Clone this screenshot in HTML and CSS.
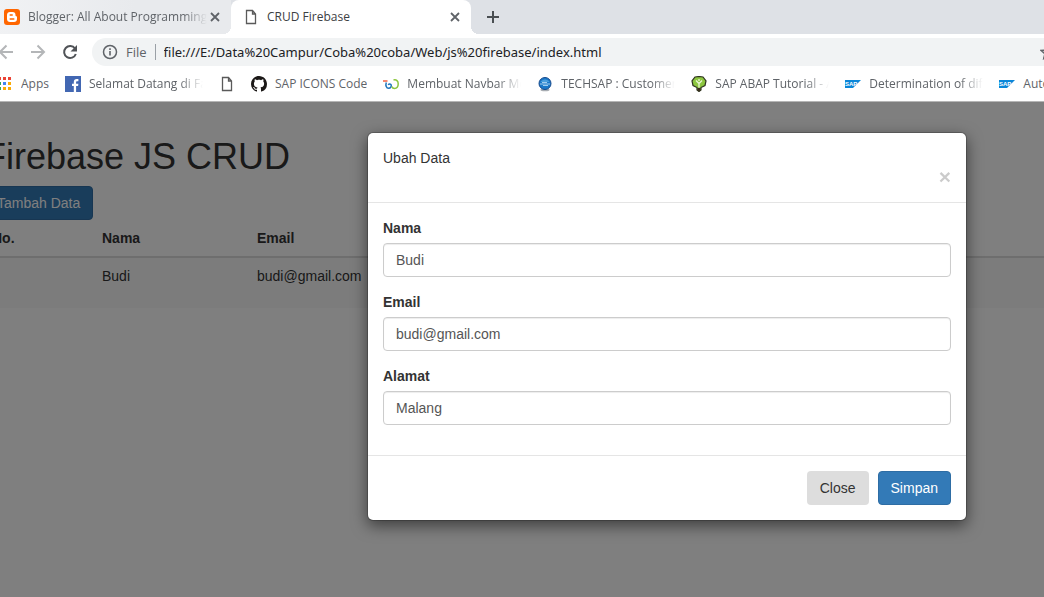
FILE: index.html
```html
<!DOCTYPE html>
<html lang="id">
<head>
    <meta charset="UTF-8">
    <meta name="viewport" content="width=device-width, initial-scale=1.0">
    <title>CRUD Firebase</title>
    <link rel="stylesheet" href="styles.css">
</head>
<body>
    <header class="browser">
        <div class="tabs">
            <div class="tab">
                <svg class="icon" viewBox="0 0 16 16">
                    <rect width="16" height="16" rx="3" fill="#ff6600"/>
                    <path d="M6 3h2.6C10.500 3 11.500 4.300 11.500 6v.6c0 .5.3.6.8.6s.7.3.7.8v2c0 1.800-1.200 3-3 3H6c-1.800 0-3-1.200-3-3V6c0-1.800 1.200-3 3-3z" fill="#fff"/>
                    <path d="M6.200 6h2M6.200 10h3.600" stroke="#ff6600" stroke-width="1.500" stroke-linecap="round"/>
                </svg>
                <span class="tab-title fade">Blogger: All About Programming</span>
                <button class="tab-close" type="button" aria-label="Close tab">
                    <svg class="icon" viewBox="0 0 16 16"><path d="M4 4l8 8M12 4l-8 8" stroke="#5f6368" stroke-width="1.800"/></svg>
                </button>
            </div>
            <div class="tab active">
                <svg class="icon" viewBox="0 0 16 16"><path d="M3.500 1.500h6l3 3.500v9.500h-9zM9.500 1.500V5h3" fill="none" stroke="#5a5a5a" stroke-width="1.300"/></svg>
                <span class="tab-title">CRUD Firebase</span>
                <button class="tab-close" type="button" aria-label="Close tab">
                    <svg class="icon" viewBox="0 0 16 16"><path d="M4 4l8 8M12 4l-8 8" stroke="#5f6368" stroke-width="1.800"/></svg>
                </button>
            </div>
            <button class="new-tab" type="button" aria-label="New tab">
                <svg class="icon" viewBox="0 0 16 16"><path d="M8 2v12M2 8h12" stroke="#4a4e52" stroke-width="2"/></svg>
            </button>
        </div>

        <div class="toolbar">
            <button class="nav-btn" type="button" aria-label="Back">
                <svg class="icon" viewBox="0 0 16 16"><path d="M15 8H2M8.500 1.500L2 8l6.500 6.500" fill="none" stroke="#b4b6b8" stroke-width="2"/></svg>
            </button>
            <button class="nav-btn" type="button" aria-label="Forward">
                <svg class="icon" viewBox="0 0 16 16"><path d="M1 8h13M7.500 1.500L14 8l-6.500 6.500" fill="none" stroke="#b4b6b8" stroke-width="2"/></svg>
            </button>
            <button class="nav-btn" type="button" aria-label="Reload">
                <svg class="icon" viewBox="0 0 16 16"><path d="M13 4.500A6 6 0 1 0 13.800 10" fill="none" stroke="#505357" stroke-width="2"/><path d="M15 1v6.500H8.500z" fill="#505357"/></svg>
            </button>
            <div class="address">
                <svg class="icon" viewBox="0 0 16 16"><circle cx="8" cy="8" r="6.500" fill="none" stroke="#5f6368" stroke-width="1.500"/><path d="M8 7v4.500M8 4.300v1.600" stroke="#5f6368" stroke-width="1.600"/></svg>
                <label class="scheme" for="url">File</label>
                <input class="url" id="url" type="text" value="file:///E:/Data%20Campur/Coba%20coba/Web/js%20firebase/index.html">
                <svg class="icon" viewBox="0 0 16 16"><path d="M8 1.500l1.900 4.600 4.900.4-3.700 3.200 1.100 4.800L8 12l-4.200 2.500 1.100-4.800L1.200 6.500l4.900-.4z" fill="none" stroke="#5f6368" stroke-width="1.500"/></svg>
            </div>
        </div>

        <nav class="bookmarks">
            <a class="bookmark" href="#">
                <svg class="icon" viewBox="0 0 16 16">
                    <path d="M1 1h3v3H1zM6 1h3v3H6zM11 1h3v3h-3z" fill="#ea4335"/>
                    <path d="M1 6h3v3H1zM1 11h3v3H1z" fill="#34a853"/>
                    <path d="M6 6h3v3H6z" fill="#4285f4"/>
                    <path d="M11 6h3v3h-3zM6 11h3v3H6zM11 11h3v3h-3z" fill="#fbab05"/>
                </svg>
                <span class="bookmark-text">Apps</span>
            </a>
            <a class="bookmark" href="#">
                <svg class="icon" viewBox="0 0 16 16"><rect width="16" height="16" fill="#4267b2"/><path d="M8.800 16v-6H7V7.700h1.800V6c0-1.900 1.100-3 2.900-3h1.700v2.200h-1.200c-.8 0-1.100.4-1.100 1.100v1.400h2.300L13.100 10h-2v6z" fill="#fff"/></svg>
                <span class="bookmark-text fade">Selamat Datang di Fa</span>
            </a>
            <a class="bookmark" href="#" aria-label="Bookmark">
                <svg class="icon" viewBox="0 0 16 16"><path d="M3.500 1.500h6l3 3.500v9.500h-9zM9.500 1.500V5h3" fill="none" stroke="#5a5a5a" stroke-width="1.300"/></svg>
            </a>
            <a class="bookmark" href="#">
                <svg class="icon" viewBox="0 0 16 16"><path fill="#1b1817" d="M8 0C3.580 0 0 3.580 0 8c0 3.540 2.290 6.530 5.470 7.590.4.070.55-.17.55-.38 0-.19-.01-.82-.01-1.490-2.010.37-2.530-.49-2.690-.94-.09-.23-.48-.94-.82-1.130-.28-.15-.68-.52-.01-.53.63-.01 1.080.58 1.230.82.72 1.210 1.870.87 2.330.66.07-.52.28-.87.51-1.070-1.780-.2-3.640-.89-3.640-3.950 0-.87.31-1.590.82-2.150-.08-.2-.36-1.020.08-2.120 0 0 .67-.21 2.200.82.64-.18 1.320-.27 2-.27s1.360.09 2 .27c1.530-1.040 2.200-.82 2.200-.82.44 1.100.16 1.920.08 2.120.51.56.82 1.270.82 2.150 0 3.070-1.870 3.750-3.650 3.950.29.25.54.73.54 1.480 0 1.070-.01 1.930-.01 2.200 0 .21.15.46.55.38A8.010 8.010 0 0 0 16 8c0-4.420-3.580-8-8-8z"/></svg>
                <span class="bookmark-text">SAP ICONS Code</span>
            </a>
            <a class="bookmark" href="#">
                <svg class="icon" viewBox="0 0 16 16" fill="none">
                    <path d="M0 5h4.500" stroke="#f26b4e" stroke-width="1.600"/>
                    <path d="M3.300 6.500c-1 3 0 5.700 2.300 5.700 2 0 3-1.600 2.600-3.200C7.800 7.700 6 7.500 5.200 8.800" stroke="#1c75bc" stroke-width="1.500"/>
                    <path d="M10.500 4c3-.8 4.700 1.200 4.700 3.800 0 2.900-1.700 4.700-3.700 4.700-1.300 0-2.300-.8-2.600-2" stroke="#8cc63f" stroke-width="1.500"/>
                </svg>
                <span class="bookmark-text fade">Membuat Navbar Me</span>
            </a>
            <a class="bookmark" href="#">
                <svg class="icon" viewBox="0 0 16 16">
                    <ellipse cx="8" cy="13.800" rx="4.500" ry="1.500" fill="#a8adb2"/>
                    <circle cx="8" cy="7.500" r="6" fill="#1b78c8" stroke="#174a8c"/>
                    <path d="M3.500 6c2-3.500 7-3.500 9 0z" fill="#4b9fdd"/>
                    <path d="M3 8h10M5 6.500h5M6 9.500h5" stroke="#c4e3f7" stroke-width=".8"/>
                </svg>
                <span class="bookmark-text fade">TECHSAP : Customer</span>
            </a>
            <a class="bookmark" href="#">
                <svg class="icon" viewBox="0 0 16 16">
                    <path d="M4 1l4-.5L12 1l3 4-1 4.500-4 2V14l-2 1.500L6 14v-2.500l-4-2L1 5z" fill="#8cc63f" stroke="#2f3320" stroke-width="1.200"/>
                    <path d="M8 11.500V7.500M5 4.500l3 3 3-3M8 3v2" fill="none" stroke="#e9f5d5" stroke-width="1.300"/>
                    <path d="M6.500 12h3v2L8 15.500 6.500 14z" fill="#37291b"/>
                </svg>
                <span class="bookmark-text fade">SAP ABAP Tutorial - A</span>
            </a>
            <a class="bookmark" href="#">
                <svg class="icon" viewBox="0 0 16 16"><path d="M0 4h16l-8 8H0z" fill="#0a86d8"/><text class="sap" x="0" y="10">SAP</text></svg>
                <span class="bookmark-text fade">Determination of diffe</span>
            </a>
            <a class="bookmark" href="#">
                <svg class="icon" viewBox="0 0 16 16"><path d="M0 4h16l-8 8H0z" fill="#0a86d8"/><text class="sap" x="0" y="10">SAP</text></svg>
                <span class="bookmark-text">Auto</span>
            </a>
        </nav>
    </header>

    <main class="page">
        <div class="container">
            <h1>Firebase JS CRUD</h1>
            <button class="btn btn-primary" type="button">Tambah Data</button>
            <table class="table">
                <thead>
                    <tr>
                        <th class="col-no">No.</th>
                        <th class="col-nama">Nama</th>
                        <th>Email</th>
                    </tr>
                </thead>
                <tbody>
                    <tr>
                        <td></td>
                        <td>Budi</td>
                        <td>budi@gmail.com</td>
                    </tr>
                </tbody>
            </table>
        </div>

        <div class="backdrop">
            <form class="modal" role="dialog" aria-labelledby="modalTitle">
                <div class="modal-header">
                    <h5 class="modal-title" id="modalTitle">Ubah Data</h5>
                    <button class="close" type="button" aria-label="Close">&times;</button>
                </div>
                <div class="modal-body">
                    <div class="form-group">
                        <label for="nama">Nama</label>
                        <input class="form-control" type="text" id="nama" value="Budi">
                    </div>
                    <div class="form-group">
                        <label for="email">Email</label>
                        <input class="form-control" type="text" id="email" value="budi@gmail.com">
                    </div>
                    <div class="form-group">
                        <label for="alamat">Alamat</label>
                        <input class="form-control" type="text" id="alamat" value="Malang">
                    </div>
                </div>
                <div class="modal-footer">
                    <button class="btn btn-secondary" type="button">Close</button>
                    <button class="btn btn-primary" type="button">Simpan</button>
                </div>
            </form>
        </div>
    </main>
</body>
</html>
```
FILE: styles.css
```css
* {
    box-sizing: border-box;
}

body {
    margin: 0;
    min-height: 100vh;
    display: flex;
    flex-direction: column;
    overflow: hidden;
    font-family: "Helvetica Neue", "Liberation Sans", Arial, sans-serif;
    font-size: 14px;
    line-height: 20px;
    color: #333;
    background: #fff;
}

button {
    font-family: inherit;
    cursor: pointer;
}

.icon {
    width: 16px;
    height: 16px;
    flex: none;
    display: block;
}

/* browser window */
.browser {
    overflow: hidden;
    border-bottom: 1px solid #b6b6b6;
    font-family: "Segoe UI", "Open Sans", "Noto Sans", sans-serif;
    font-size: 12px;
    line-height: 16px;
    color: #5f6368;
}

.tabs {
    display: flex;
    height: 34px;
    padding-right: 8px;
    margin-left: -8px;
    background: #dee1e6;
}

.tab {
    display: flex;
    align-items: center;
    width: 239px;
    padding: 0 8px 0 12px;
    background: linear-gradient(to right, #f1f2f4, #e8eaed 60%);
}

.tab.active {
    position: relative;
    width: 240px;
    background: #fff;
    color: #3c4043;
    border-radius: 8px 8px 0 0;
}

.tab.active::before,
.tab.active::after {
    content: "";
    position: absolute;
    bottom: 0;
    width: 8px;
    height: 8px;
}

.tab.active::before {
    right: 100%;
    background: radial-gradient(circle at 0 0, transparent 8px, #fff 8px);
}

.tab.active::after {
    left: 100%;
    background: radial-gradient(circle at 100% 0, transparent 8px, #fff 8px);
}

.tab-title {
    flex: 1;
    margin-left: 8px;
    overflow: hidden;
    white-space: nowrap;
}

.tab-close,
.new-tab,
.nav-btn {
    display: flex;
    align-items: center;
    justify-content: center;
    padding: 0;
    border: none;
    background: none;
}

.new-tab {
    width: 28px;
    margin-left: 8px;
}

.fade {
    -webkit-mask-image: linear-gradient(to left, transparent, #000 24px);
    mask-image: linear-gradient(to left, transparent, #000 24px);
}

.toolbar {
    display: flex;
    align-items: center;
    padding-top: 4px;
    margin-left: -10px;
}

.nav-btn {
    width: 32px;
    height: 28px;
}

.address {
    flex: 1;
    display: flex;
    align-items: center;
    gap: 8px;
    height: 28px;
    margin-left: 6px;
    margin-right: -24px;
    padding: 0 12px 0 10px;
    border-radius: 14px 0 0 14px;
    background: #f1f3f4;
    font-size: 13px;
}

.scheme {
    padding-right: 8px;
    border-right: 1px solid #9aa0a6;
}

.url {
    flex: 1;
    min-width: 0;
    padding: 0;
    border: none;
    outline: none;
    background: none;
    font-family: "Segoe UI", "Noto Sans", "Open Sans", sans-serif;
    font-size: 13px;
    color: #202124;
}

.bookmarks {
    display: flex;
    align-items: center;
    gap: 16px;
    height: 35px;
    margin-left: -3px;
}

.bookmark {
    display: flex;
    align-items: center;
    gap: 8px;
    flex: none;
    color: #5f6368;
    text-decoration: none;
}

.bookmark-text {
    max-width: 114px;
    overflow: hidden;
    white-space: nowrap;
}

.bookmark-text.fade {
    width: 114px;
}

.sap {
    font-family: "Liberation Sans", Arial, sans-serif;
    font-size: 6px;
    font-weight: bold;
    fill: #fff;
}

/* page content */
.page {
    position: relative;
    flex: 1;
}

.container {
    margin-left: -16px;
    padding-top: 35px;
}

h1 {
    margin: 0 0 9px;
    font-size: 36px;
    font-weight: 500;
    line-height: 40px;
}

.btn {
    padding: 6px 12px;
    border: 1px solid transparent;
    border-radius: 4px;
    font-size: 14px;
    line-height: 20px;
}

.btn-primary {
    display: block;
    color: #fff;
    background: #337ab7;
    border-color: #2e6da4;
}

.btn-secondary {
    color: #333;
    background: #ddd;
}

.table {
    width: 100%;
    border-collapse: collapse;
    text-align: left;
}

.table th,
.table td {
    padding: 8px;
    vertical-align: top;
}

.table th {
    border-bottom: 2px solid #ddd;
}

.table td {
    height: 51px;
    background: #f9f9f9;
}

.col-no {
    width: 110px;
}

.col-nama {
    width: 155px;
}

/* modal */
.backdrop {
    position: absolute;
    inset: 0;
    display: flex;
    justify-content: flex-end;
    align-items: flex-start;
    padding: 30px 77px 30px 15px;
    background: rgba(0, 0, 0, 0.5);
}

.modal {
    width: 100%;
    max-width: 600px;
    background: #fff;
    background-clip: padding-box;
    border: 1px solid rgba(0, 0, 0, 0.2);
    border-radius: 6px;
    box-shadow: 0 5px 15px rgba(0, 0, 0, 0.5);
}

.modal-header {
    display: flex;
    flex-direction: column;
    padding: 15px;
    border-bottom: 1px solid #e5e5e5;
}

.modal-title {
    margin: 0;
    font-size: 14px;
    font-weight: 500;
    line-height: 20px;
}

.close {
    align-self: flex-end;
    margin-top: -2px;
    padding: 0;
    border: none;
    background: none;
    font-size: 21px;
    font-weight: bold;
    line-height: 21px;
    color: #000;
    text-shadow: 0 1px 0 #fff;
    opacity: 0.2;
}

.modal-body {
    padding: 15px;
}

.form-group {
    margin-bottom: 15px;
}

.form-group label {
    display: block;
    margin-bottom: 5px;
    font-weight: bold;
}

.form-control {
    display: block;
    width: 100%;
    height: 34px;
    padding: 6px 12px;
    border: 1px solid #ccc;
    border-radius: 4px;
    font-family: inherit;
    font-size: 14px;
    color: #555;
    box-shadow: inset 0 1px 1px rgba(0, 0, 0, 0.075);
}

.modal-footer {
    display: flex;
    justify-content: flex-end;
    gap: 9px;
    padding: 15px;
    border-top: 1px solid #e5e5e5;
}
```
